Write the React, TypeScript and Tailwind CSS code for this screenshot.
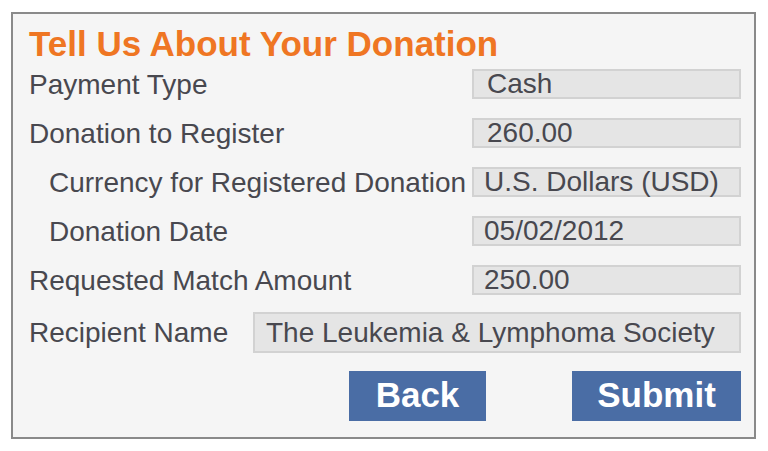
const rows = [
  { label: 'Payment Type', value: 'Cash', indent: false, pad: 'pl-[13px]' },
  { label: 'Donation to Register', value: '260.00', indent: false, pad: 'pl-[13px]' },
  { label: 'Currency for Registered Donation', value: 'U.S. Dollars (USD)', indent: true, pad: 'pl-[10px]' },
  { label: 'Donation Date', value: '05/02/2012', indent: true, pad: 'pl-[10px]' },
  { label: 'Requested Match Amount', value: '250.00', indent: false, pad: 'pl-[10px]' },
];

const App = () => {
  return (
    <div className="w-[768px] h-[451px] bg-white pt-[12px] pl-[11px] font-['Liberation_Sans',Arial,sans-serif]">
      <div className="flex flex-col w-[745px] h-[427px] border-2 border-[#8a8a8a] bg-[#f5f5f5] pl-[16px] pr-[13px] pt-[12px]">
        <h1 className="text-[35px] leading-none font-bold text-[#ef7623]">Tell Us About Your Donation</h1>
        <div className="flex flex-col gap-[19px] mt-[8px]">
          {rows.map((row) => (
            <div key={row.label} className="flex flex-row items-center justify-between">
              <div className={`text-[28px] leading-none text-[#48484f] mt-[2px] ${row.indent ? 'pl-5' : ''}`}>
                {row.label}
              </div>
              <div
                className={`flex items-center w-[269px] h-[30px] border-2 border-[#d2d2d2] bg-[#e5e5e5] text-[28px] leading-none text-[#48484f] ${row.pad}`}
              >
                {row.value}
              </div>
            </div>
          ))}
        </div>
        <div className="flex flex-row items-center mt-[17px]">
          <div className="text-[28px] leading-none text-[#48484f]">Recipient Name</div>
          <div className="flex items-center ml-auto w-[488px] h-[41px] border-2 border-[#d2d2d2] bg-[#e5e5e5] pl-[11px] text-[28px] leading-none text-[#48484f]">
            The Leukemia &amp; Lymphoma Society
          </div>
        </div>
        <div className="flex flex-row justify-end gap-[86px] mt-[18px]">
          <button className="w-[137px] h-[50px] pb-[4px] bg-[#4a6da5] text-white text-[35px] font-bold leading-none">
            Back
          </button>
          <button className="w-[169px] h-[50px] pb-[4px] bg-[#4a6da5] text-white text-[35px] font-bold leading-none">
            Submit
          </button>
        </div>
      </div>
    </div>
  );
};

export default App;
